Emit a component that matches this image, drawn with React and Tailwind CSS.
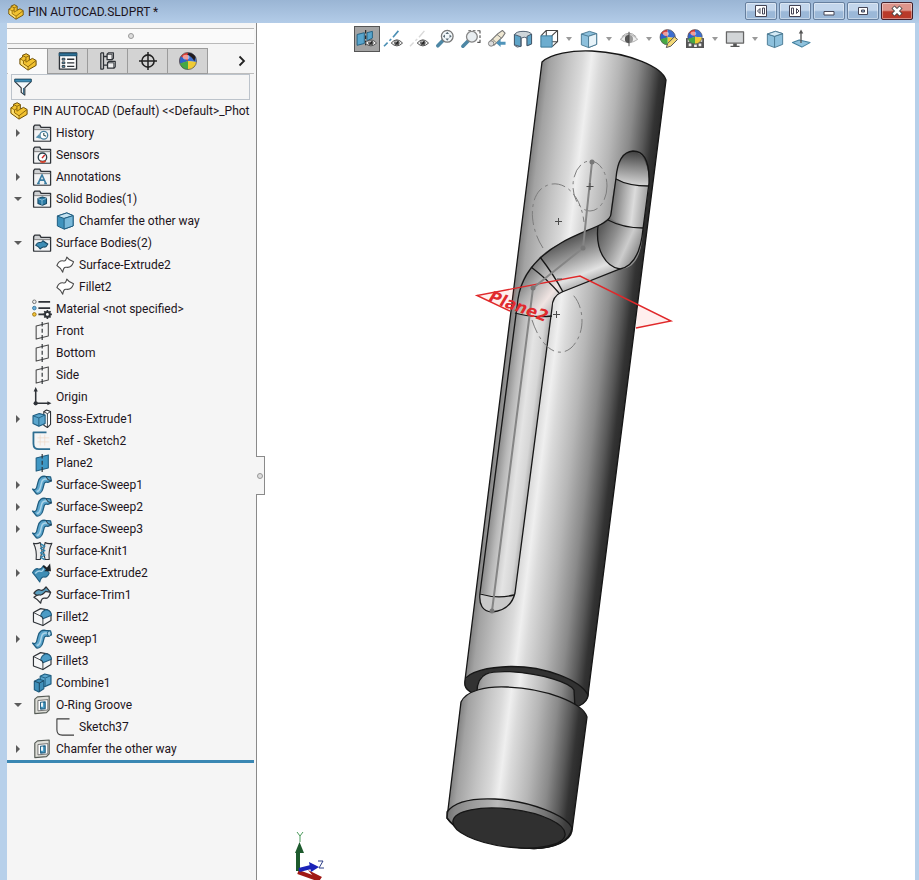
import React from "react";

const INK = "#2f3338";
const BLUE = "#5aa5cc";
const DEEP = "#1f5d80";
const PALE = "#a9d3e8";

function Icon({ children, size = "size-[18px]" }) {
  return (
    <svg viewBox="0 0 20 20" className={`${size} shrink-0 overflow-visible`} fill="none" strokeLinejoin="round" aria-hidden="true">
      {children}
    </svg>
  );
}

function PartShape() {
  return (
    <g stroke="#6b4d05" strokeWidth="1.1">
      <path d="M1 6.5 4 4.5V2.5L8 .8l3.500 2v5l3.500-1.800L19 8.300v5.500L10 19 1 12.500Z" fill="#f2c230" />
      <path d="m1 6.500 4 2.300V12l5 3.300 9-7M4 2.700l3.700 2.100L11.500 3M7.700 4.800v5.400l4-2.400M5 8.800l2.700-1.500M10 15.300V19" fill="none" stroke="#8f6a0c" />
      <path d="m2 7.500 2.300 1.400v3.300L9.300 15.700v2L2 12.300Z" fill="#fbe07a" stroke="none" />
    </g>
  );
}

function Folder({ children }) {
  return (
    <Icon>
      <path d="M.700 19V3L2 1.200h5.500L9 3.700h10.500V19Z" fill="#cfd1d3" stroke={INK} strokeWidth="1.500" />
      <path d="M1.500 6.500h17.300v11.800H1.500Z" fill="#f2f3f4" />
      <path d="M1 6.300h18.500" stroke="#777" />
      {children}
    </Icon>
  );
}

function Cube() {
  return (
    <g stroke={DEEP} strokeWidth="1.100">
      <path d="M1.500 4.500 12 1l7 3v11.500L9 19l-7.500-3.500Z" fill="#3f93bd" />
      <path d="M1.500 4.500 12 1l7 3-10 3.200Z" fill="#c5e3f1" />
      <path d="M9 7.200V19l10-3.500V4Z" fill="#79b9da" />
    </g>
  );
}

function Sweep({ closed }) {
  return (
    <Icon>
      <path d="M-.500 14.500c2 1 4 .500 4.500-1.500l1.500-6C6.500 2 10 -.500 14 .500l5.500 .500 1 4.500-4 1.500c-2-.500-3.500-.500-4 1.500l-1.500 5.500C10 18 7 20.500 4 20Z" fill={BLUE} stroke={DEEP} strokeWidth="1.400" />
      <path d="M4 17.300c2.500-.500 3.500-2 4-4l1.500-6C10.200 4.500 12 3 15.500 3.500" stroke={PALE} strokeWidth="1.700" />
      {closed ? <ellipse cx="18" cy="4" rx="2" ry="2.900" fill={PALE} stroke={DEEP} /> : <path d="m14.500 .500 2 3.500 4 1.500" stroke={INK} />}
    </Icon>
  );
}

function PlaneShape({ fill }) {
  return (
    <g>
      <path d="M3.500 4.500 17 1v14.500L3.500 19Z" fill={fill} stroke={fill === "none" ? "#4a4a4a" : DEEP} strokeWidth="1.200" />
      <path d="M10.200 0v5m0 2.500v4.500m0 2.500V20" stroke={INK} strokeWidth="1.300" />
    </g>
  );
}

function ColorBall({ cx = 10, cy = 10, r = 9 }) {
  return (
    <g transform={`translate(${cx} ${cy}) scale(${r / 9})`}>
      <path d="M0 0V-9A9 9 0 0 0-8.500 3Z" fill="#dc3a33" />
      <path d="M0 0-8.500 3A9 9 0 0 1-7.500-5Z" fill="#2c62c9" />
      <path d="M0 0 0-9A9 9 0 0 1 9 1Z" fill="#3d6fd0" />
      <path d="M0 0 9 1A9 9 0 0 1 0 9Z" fill="#efcb34" />
      <path d="M0 0V9a9 9 0 0 1-8.700-6.500Z" fill="#45a845" />
      <circle r="9" stroke="#555" strokeWidth=".8" />
      <ellipse cx="-2" cy="-4" rx="3.500" ry="2.500" fill="#fff" opacity=".5" />
    </g>
  );
}

function Eye({ x = 0, y = 0, s = 1 }) {
  return (
    <g transform={`translate(${x} ${y}) scale(${s})`}>
      <path d="M0 5Q7-3 14 5q-7 7-14 0Z" fill="#f2f2f2" stroke="#4e4e4e" strokeWidth="1.200" />
      <circle cx="7" cy="4.700" r="3.300" fill="#555" />
      <circle cx="7" cy="4.700" r="1.300" fill="#111" />
      <circle cx="6" cy="3.500" r=".9" fill="#fff" />
    </g>
  );
}

const icons = {
  part: <Icon><PartShape /></Icon>,
  history: (
    <Folder>
      <circle cx="12" cy="12.500" r="4.300" fill="#fff" stroke="#46809f" strokeWidth="1.500" />
      <path d="M12 10v2.500l2.500 1.200" stroke="#355" strokeWidth="1.300" />
      <path d="m3 15 4-4 1.500 5.500Z" fill="#5a93b0" />
    </Folder>
  ),
  sensors: (
    <Folder>
      <circle cx="10.500" cy="12.500" r="4.700" fill="#fff" stroke="#2b3f4a" strokeWidth="1.500" />
      <path d="m10 13.500 3-3.500" stroke="#c22" strokeWidth="1.600" />
      <path d="M8 17a5 5 0 0 0 6-.500" stroke="#d8432b" strokeWidth="2" />
    </Folder>
  ),
  annotations: (
    <Folder>
      <path d="m5.800 17 4.200-9.500 4.200 9.500M7.500 13.500h5M4.500 17.200h3m5 0h3" stroke="#3b7ea3" strokeWidth="1.800" />
    </Folder>
  ),
  solidFolder: (
    <Folder>
      <path d="m5.500 9.500 5-1.700 4.500 1.400v5.800l-4.500 2-5-2Z" fill="#2b7ba5" stroke="#174a66" strokeWidth="1.200" />
      <path d="m5.500 9.500 4.500 1.700 5-2M10 11.200V17" stroke="#a9d3e8" strokeWidth=".8" />
    </Folder>
  ),
  surfaceFolder: (
    <Folder>
      <path d="M3 12.500Q5 9 7.500 9.500q2.500 0 3.500-2 3 2.500 5.500 3.500-2 4-4 3.500T8 16.500Q6 13.500 3 12.500Z" fill="#3d8db5" stroke="#174a66" strokeWidth="1.200" />
    </Folder>
  ),
  cube: <Icon><Cube /></Icon>,
  surface: (
    <Icon>
      <path d="M1 10.500C3 5.500 6 5 8.500 5.500 11 6 11.500 3.500 12 1.200c2 3 4 4 7.500 5.300-2 6-5 6.500-8 6-2.500-.500-3.500 2-4 5.500-1.500-3-3-5.500-6.500-7.500Z" fill="#fff" stroke="#4a4a4a" strokeWidth="1.200" />
    </Icon>
  ),
  material: (
    <Icon>
      <path d="M6 2h13M6 9h13M6 16h6" stroke={INK} strokeWidth="2" />
      <circle cx="1.500" cy="2" r="2" fill="#eee" stroke="#666" />
      <circle cx="1.500" cy="9" r="2" fill="#6db0dc" stroke="#35759c" />
      <circle cx="1.500" cy="16" r="2" fill="#f3c437" stroke="#9a7414" />
      <path d="M16 11v10m-5-5h10M12.500 12.500l7 7m0-7-7 7" stroke={INK} strokeWidth="1.800" />
      <circle cx="16" cy="16" r="2.700" fill="#fff" stroke={INK} strokeWidth="2.200" />
    </Icon>
  ),
  plane: <Icon><PlaneShape fill="none" /></Icon>,
  planeBlue: <Icon><PlaneShape fill="#3f97c4" /></Icon>,
  origin: (
    <Icon>
      <path d="M3 3v14h14" stroke={INK} strokeWidth="1.700" />
      <path d="M3-1 5.300 4H.700ZM20.500 17 16 14.700v4.600Z" fill={INK} />
      <circle cx="3" cy="17" r="2.400" fill={INK} />
    </Icon>
  ),
  boss: (
    <Icon>
      <path d="M12 2 15 0l4.500 1.800V16L16 19.500 12 17Z" fill="#fff" stroke={INK} strokeWidth="1.200" />
      <path d="M16 4v15M12 2l4 2 3.500-2.200" stroke={INK} />
      <path d="m0 6.500 7-2.500 6.500 1.500v9.500L6.500 18 0 15Z" fill={BLUE} stroke={DEEP} strokeWidth="1.200" />
      <path d="m0 6.500 6.500 2.300 7-3.300M6.500 9v9" stroke={DEEP} />
    </Icon>
  ),
  sketchBlue: (
    <Icon>
      <path d="M5 6.500h13M5 11h13M8 3v12m5-12v12" stroke="#f0d9c8" strokeWidth=".8" />
      <path d="M15 .500H.500v12.500q0 6 6 6H19" stroke="#2d6e92" strokeWidth="2" />
    </Icon>
  ),
  sketch: <Icon><path d="M15 1H1v12q0 6 6 6h13" stroke="#3c3c3c" strokeWidth="1.200" /></Icon>,
  sweep: <Sweep />,
  sweepSolid: <Sweep closed />,
  knit: (
    <Icon>
      <path d="M.500 1.500Q5 2.500 8 .500L10 10 8 19.500H3.500Q4.500 9 .500 1.500ZM21 1.500q-4.500 1-7.500-1L11.500 10l2 9.500H18q-1-10.500 3-18Z" fill="#ececec" stroke={INK} strokeWidth="1.200" />
      <path d="m8.500 2 4.500 2.500-4.500 2.500 4.500 2.500L8.500 12l4.500 2.500L8.500 17l4.500 2.500" stroke="#3183ab" strokeWidth="1.700" />
    </Icon>
  ),
  extrude: (
    <Icon>
      <path d="M-.500 9.500Q3 4 6 5.500 9 6.500 11.500 2L18 10q-2 5-5.500 4.500T7.500 20Q3.500 14-.500 9.500Z" fill="#3e8db5" stroke={DEEP} strokeWidth="1.200" />
      <path d="M2.500 10.500q3-3.500 5.500-2.500t4-3" stroke={PALE} strokeWidth="1.500" />
      <path d="m12 1 3.500 3L19-.500 20 8h-7.500l2-2L11 3Z" fill="#1d2226" />
    </Icon>
  ),
  trim: (
    <Icon>
      <path d="M1 8q4-5 7-3.500T14.500 1L19.500 7q-3 3.500-6 2.500T7.500 13Z" fill="#5b9fc0" stroke={INK} strokeWidth="1.400" />
      <path d="M1 12.500q4-3 6.500-2.500T14 6l5.500 1q-2 7.500-6 6.500T8.500 19Q5.500 15 1 12.500Z" fill="#f6f6f6" stroke={INK} strokeWidth="1.400" />
    </Icon>
  ),
  fillet: (
    <Icon>
      <path d="M.500 5 8.500 .700 16 2q3.500 1.500 4 5.500V14L11 19.500 .500 15.500Z" fill="#f5f6f7" stroke={INK} strokeWidth="1.300" />
      <path d="M8.500 9Q9 4.500 14 2q6 .500 6.500 6L11 12Q11 10 8.500 9Z" fill="#4c9cc6" stroke={DEEP} strokeWidth="1.200" />
      <path d="m.500 5 8 4q2.500 1 2.500 3v7.500" stroke={INK} />
    </Icon>
  ),
  combine: (
    <Icon>
      <path d="m8 2.500 5-2.500 7 1.800v9.200L13 14 8 12Z" fill={BLUE} stroke={DEEP} strokeWidth="1.300" />
      <path d="m8 2.500 5.500 2 6.500-2.700M13.500 5v8" stroke={DEEP} />
      <path d="m1.500 8 5-2.500L12 7.500v9L6.500 20l-5-2.500Z" fill="#3f8fb9" stroke={DEEP} strokeWidth="1.300" />
      <path d="M1.500 8 7 10l5-2.500M7 10v9.500" stroke="#173f57" />
    </Icon>
  ),
  groove: (
    <Icon>
      <path d="m2 3.500 3-2.500 13-1v15.500l-3 3L2 19.500Z" fill="#dfdfd9" stroke="#555b55" strokeWidth="1.300" />
      <path d="M5.500 5 16.500 4v11.500l-11 1Z" fill="#fff" stroke="#666" />
      <path d="m8.500 7 5-.500v7.500l-5 .500Z" fill="#4ba0cb" stroke={DEEP} strokeWidth="1.300" />
      <path d="M9 7.500v4.500h2V7.300Z" fill="#fff" />
    </Icon>
  ),
};

const tree = [
  ["history", "History", 1, "closed"],
  ["sensors", "Sensors", 1],
  ["annotations", "Annotations", 1, "closed"],
  ["solidFolder", "Solid Bodies(1)", 1, "open"],
  ["cube", "Chamfer the other way", 2],
  ["surfaceFolder", "Surface Bodies(2)", 1, "open"],
  ["surface", "Surface-Extrude2", 2],
  ["surface", "Fillet2", 2],
  ["material", "Material <not specified>", 1],
  ["plane", "Front", 1],
  ["plane", "Bottom", 1],
  ["plane", "Side", 1],
  ["origin", "Origin", 1],
  ["boss", "Boss-Extrude1", 1, "closed"],
  ["sketchBlue", "Ref - Sketch2", 1],
  ["planeBlue", "Plane2", 1],
  ["sweep", "Surface-Sweep1", 1, "closed"],
  ["sweep", "Surface-Sweep2", 1, "closed"],
  ["sweep", "Surface-Sweep3", 1, "closed"],
  ["knit", "Surface-Knit1", 1],
  ["extrude", "Surface-Extrude2", 1, "closed"],
  ["trim", "Surface-Trim1", 1],
  ["fillet", "Fillet2", 1],
  ["sweepSolid", "Sweep1", 1, "closed"],
  ["fillet", "Fillet3", 1],
  ["combine", "Combine1", 1],
  ["groove", "O-Ring Groove", 1, "open"],
  ["sketch", "Sketch37", 2],
  ["groove", "Chamfer the other way", 1, "closed"],
];

function TreeRow({ icon, label, level, state }) {
  return (
    <li className={`flex h-[22px] items-center ${level === 2 ? "pl-[23px]" : ""}`}>
      <span className="mr-1 flex w-[22px] shrink-0 justify-center">
        {state && (
          <button type="button" aria-label={`Toggle ${label}`} aria-expanded={state === "open"} className="flex size-3 items-center justify-center">
            <svg viewBox="0 0 8 8" className="size-2">
              <path d={state === "open" ? "M0 2h8L4 6Z" : "M2 0v8l4-4Z"} fill="#5c5c5c" />
            </svg>
          </button>
        )}
      </span>
      <button type="button" className="flex items-center gap-[5px] whitespace-nowrap text-left">
        {icons[icon]}
        {label}
      </button>
    </li>
  );
}

function WindowButton({ label, close, children }) {
  return (
    <button
      type="button"
      aria-label={label}
      className={`flex h-[18px] w-8 items-center justify-center rounded-xs border shadow-[inset_0_0_0_1px_#ffffff66] ${
        close
          ? "border-[#43202b] bg-linear-to-b from-[#dd958c] from-45% to-[#b93a2a] to-55%"
          : "border-[#667f9e] bg-linear-to-b from-[#c3d6ec] from-45% to-[#9bb8d8] to-55%"
      }`}
    >
      <svg viewBox="0 0 16 14" className="h-3.5 w-4" fill="none" aria-hidden="true">
        {children}
      </svg>
    </button>
  );
}

function TitleBar() {
  return (
    <header className="flex h-[23px] items-start bg-linear-to-b from-[#9ab5d4] to-[#b3cce8] pr-1.5 pl-2">
      <h1 className="flex h-[23px] flex-1 items-center gap-1">
        <Icon size="size-4"><PartShape /></Icon>
        PIN AUTOCAD.SLDPRT *
      </h1>
      <div className="flex gap-0.5 pt-0.5">
        <WindowButton label="Dock left">
          <path d="M2.500 1.500h11v11h-11Z" fill="#fff" stroke="#445" />
          <path d="M7 4.500v5L4.500 7ZM9.500 4h2v6h-2Z" stroke="#445" />
        </WindowButton>
        <WindowButton label="Dock right">
          <path d="M2.500 1.500h11v11h-11Z" fill="#fff" stroke="#445" />
          <path d="M9.500 4.500v5L12 7ZM4.500 4h2v6h-2Z" stroke="#445" />
        </WindowButton>
        <WindowButton label="Minimize">
          <path d="M3 7.500h10v3.500H3Z" fill="#fff" stroke="#445" />
        </WindowButton>
        <WindowButton label="Restore">
          <path d="M3.500 3.500h9v7h-9Z" fill="#fff" stroke="#445" />
          <path d="M6.500 6h3v2h-3Z" stroke="#445" fill="#9bb8d8" />
        </WindowButton>
        <WindowButton label="Close" close>
          <path d="m4 3 8 8m0-8-8 8" stroke="#444" strokeWidth="4.500" />
          <path d="m4.500 3.500 7 7m0-7-7 7" stroke="#fff" strokeWidth="2.600" />
        </WindowButton>
      </div>
    </header>
  );
}

const tabs = [
  ["Feature tree", <PartShape />],
  [
    "Properties",
    <g stroke={INK} strokeWidth="1.500">
      <path d="M.500 1h19v18H.500Z" fill="#fff" />
      <path d="M.500 1.500h19V4H.500Z" fill="#2f7298" stroke="#235a7a" />
      <path d="M3.500 7h3v2h-3Zm0 4h3v2h-3Zm0 4h3v2h-3Z" fill="#5aa5cc" strokeWidth="1" />
      <path d="M9 8h8M9 12h8M9 16h8" />
    </g>,
  ],
  [
    "Configurations",
    <g stroke={INK} strokeWidth="1.400">
      <path d="M2 1v18h3M2 1h3v18M5 5h4M5 14.500h4" />
      <path d="M9 2.500 10.500 1H16v6l-1.500 1.500H9ZM9.500 12l1.500-1.500h7v6L16.500 18h-7Z" fill="#eee" />
      <path d="M9 2.500h5.500v6M9.500 12h7v6" strokeWidth="1" />
    </g>,
  ],
  [
    "Dimensions",
    <g stroke="#222" strokeWidth="1.700">
      <circle cx="10" cy="10" r="6.800" />
      <path d="M10 0v20M0 10h20" />
    </g>,
  ],
  [
    "Appearance",
    <g>
      <ColorBall r={9.5} />
      <path d="M9 2.500q4-4 9.500 3-1 3-1.500 5-2-5-8-8Z" fill="#221b1d" />
    </g>,
  ],
];

function Sidebar() {
  return (
    <aside className="relative z-10 w-[250px] shrink-0 border-r border-[#8a8a8a] bg-[#f5f5f5]">
      <div className="mt-[5px] mr-0.5 flex h-4 items-center justify-center border-y border-[#b9b9b9] bg-[#fafafa]">
        <span className="size-1.5 rounded-full border border-[#999] bg-[#ddd]" />
      </div>
      <div className="mt-1 mr-0.5 flex h-[26px] border-b border-[#bdbdbd] pl-px">
        <div role="tablist" className="-mb-px flex">
          {tabs.map(([label, drawing], i) => (
            <button
              key={label}
              type="button"
              role="tab"
              aria-label={label}
              aria-selected={i === 0}
              className={`flex w-10 items-center justify-center border-t border-r border-[#9b9b9b] ${i === 0 ? "bg-[#fafafa]" : "border-b bg-[#d3d3d3]"}`}
            >
              <Icon>{drawing}</Icon>
            </button>
          ))}
        </div>
        <button type="button" aria-label="More tabs" className="ml-auto flex w-6 items-center justify-center">
          <svg viewBox="0 0 8 12" className="h-3 w-2" fill="none">
            <path d="m1.500 1.500 4.500 4.500-4.500 4.500" stroke="#222" strokeWidth="1.800" />
          </svg>
        </button>
      </div>
      <div className="mr-1.5 ml-1 flex h-[26px] items-center border border-[#bcc3cb] pl-0.5">
        <Icon>
          <path d="M1 1.500h18v2.500l-7 7V19l-4-3v-5L1 4Z" fill="#f4f7f9" stroke={INK} strokeWidth="1.300" />
          <path d="M1 1.500h18v2.700H1Z" fill="#3e8fb8" stroke={DEEP} />
          <path d="M10 11v7l1.500.500V11Z" fill="#3e6e8a" />
        </Icon>
        <input type="text" aria-label="Filter" className="h-full min-w-0 flex-1 bg-transparent outline-none" />
      </div>
      <div className="mr-0.5 overflow-hidden border-b-3 border-[#3a87b3]">
        <button type="button" className="flex h-[22px] items-center gap-[5px] pl-[3px] whitespace-nowrap">
          {icons.part}
          PIN AUTOCAD (Default) &lt;&lt;Default&gt;_Phot
        </button>
        <ul>
          {tree.map(([icon, label, level, state], i) => (
            <TreeRow key={i} icon={icon} label={label} level={level} state={state} />
          ))}
        </ul>
      </div>
      <button
        type="button"
        aria-label="Collapse panel"
        className="absolute top-[433px] -right-[9px] flex h-[39px] w-[9px] items-center justify-center border border-l-0 border-[#8a8a8a] bg-[#f5f5f5]"
      >
        <span className="size-1.5 shrink-0 rounded-full border border-[#999] bg-[#ddd]" />
      </button>
    </aside>
  );
}

function SoftCube({ edges }) {
  return (
    <g stroke="#45758e" strokeWidth="1">
      <path d="m1.500 4.500 9-3 8 2.500v12L9.500 19.500l-8-3Z" fill="#8dc0dc" />
      <path d="m1.500 4.500 8 2.500 9-3M9.500 7v12.500" />
      {edges ? <path d="m9.500 7 9-3v12l-9 3.500Z" fill="#e7f3f9" /> : <path d="m1.500 4.500 9-3 8 2.500-9 3Z" fill="#d4eaf5" />}
    </g>
  );
}

const tools = [
  [
    "View planes",
    <g>
      <path d="M-1 5 7 3v12l-8 2ZM10 3l6-1.500V9l-6 3Z" fill="#58a5cd" stroke={DEEP} />
      <path d="M8.500 0v4m0 2v4m0 2v5" stroke="#222" strokeWidth="1.300" />
      <Eye x={8} y={10} s={0.9} />
    </g>,
    false,
    true,
  ],
  [
    "View axes",
    <g>
      <path d="M0 18 4 14m2-2 2-2m2-2 6-7" stroke="#4b8fb4" strokeWidth="1.800" />
      <Eye x={8} y={10} s={0.9} />
    </g>,
  ],
  [
    "View sketches",
    <g>
      <path d="M0 18 4 14m2-2 2-2m2-2 6-7" stroke="#d9d9d9" strokeWidth="1.600" />
      <Eye x={8} y={10} s={0.9} />
    </g>,
  ],
  [
    "Zoom to fit",
    <g>
      <path d="m2 17.500 6-6" stroke="#4d87a5" strokeWidth="4" strokeLinecap="round" />
      <circle cx="12.500" cy="7" r="6.500" fill="#f2f7fa" stroke="#777" strokeWidth="1.400" />
      <path d="M12.500 2 14.500 4.500h-4Zm0 10-2-2.500h4ZM7.500 7 10 5v4Zm10 0L15 5v4Z" fill="#5c6d77" />
    </g>,
  ],
  [
    "Zoom to area",
    <g>
      <path d="M7 .800h3m2 0h3m2 0h3v3m0 2v3m0 2v3h-3" stroke="#555" strokeWidth="1.300" />
      <path d="m1 18 6-6" stroke="#4d87a5" strokeWidth="4" strokeLinecap="round" />
      <circle cx="11" cy="7.500" r="6" fill="#e9eef1" stroke="#858585" strokeWidth="1.400" />
    </g>,
  ],
  [
    "Previous view",
    <g>
      <path d="m2 13 9-9 5-3.500L19 3.500 16 8l-9.500 9Z" fill="#efe8d3" stroke="#777" strokeWidth="1.200" />
      <path d="m10 5 5 4M5 10l4 4" stroke="#777" />
      <circle cx="3.500" cy="15" r="3" fill="#ddd" stroke="#777" />
      <path d="m9 14.500 5-4.500v3h5.500v3.500H14v2.500Z" fill="#4f94ba" />
    </g>,
  ],
  [
    "Section view",
    <g stroke="#456">
      <path d="M.500 5Q3 1.500 10 1.500t9.500 3v11l-5 2V9q-3-2-6.500 0v9l-4.500 1-3-2Z" fill="#cfd6da" />
      <path d="m.500 5 7 2.500v11l-7-2ZM14.500 7l5-2.500v11l-5 2Z" fill="#5ea4c8" />
    </g>,
  ],
  [
    "View orientation",
    <g>
      <path d="M1 6.500 7 .500h12.500v12.500l-6 5.500M7 .500v12.500H1m6 0h12.500M13 6.500l6.500-6" stroke="#444" strokeWidth="1.200" />
      <path d="M1 6.500h12.500v12.500H1Z" fill="#6dadcf" stroke="#3c7796" strokeWidth="1.100" />
    </g>,
    true,
  ],
  ["Display style", <SoftCube edges />, true],
  [
    "Hide or show",
    <g>
      <path d="M.500 10.500Q10-.500 19.500 10.500 10 18 .500 10.500Z" fill="#efefef" stroke="#b9b9b9" strokeWidth="1.200" />
      <path d="M2 7.500Q10-.500 18 7.500" stroke="#999" />
      <circle cx="10" cy="10" r="4.500" fill="#9a9a9a" />
      <path d="M10 5.500a4.500 4.500 0 0 0 0 9Z" fill="#555" />
      <path d="M10 2v16" stroke="#444" />
    </g>,
    true,
  ],
  [
    "Edit appearance",
    <g>
      <ColorBall cx={8.5} cy={8} r={8.5} />
      <path d="m7 19.500 1.500-4.500 7.500-7.500 3.500 3L12 18Z" fill="#f3d978" stroke="#555" strokeWidth="1.100" />
    </g>,
  ],
  [
    "Apply scene",
    <g>
      <path d="M0 9h20v11H0Z" fill="#555" />
      <path d="M2 10h3v3H2Zm13 0h3v3h-3ZM3 15h3v3H3Zm11 0h3v3h-3Zm-5 1h3v3H9Z" fill="#eee" />
      <ColorBall cx={10} cy={7.5} r={8} />
    </g>,
    true,
  ],
  [
    "View settings",
    <g>
      <path d="M.500 2h19v12.500H.500Z" fill="#d2d5d7" stroke="#666" strokeWidth="1.400" />
      <path d="M8 15h4v2.500h3V19H5v-1.500h3Z" fill="#555" />
    </g>,
    true,
  ],
  ["Isometric view", <SoftCube />],
  [
    "Normal to",
    <g>
      <path d="m.500 14 7.500-3 12 3-9 5Z" fill="#8fc2dd" stroke="#43809f" strokeWidth="1.200" />
      <path d="M10 14.500V3" stroke="#555" strokeWidth="1.500" />
      <path d="M10-.500 12.500 4h-5Z" fill="#555" />
    </g>,
  ],
];

function ViewToolbar() {
  return (
    <div role="toolbar" aria-label="View" className="relative flex justify-center pt-[3px] pr-1">
      {tools.map(([label, drawing, menu, active]) => (
        <React.Fragment key={label}>
          <button
            type="button"
            aria-label={label}
            className={`flex size-[26px] items-center justify-center ${active ? "border border-[#555] bg-[#a3a3a3]" : ""}`}
          >
            <Icon>{drawing}</Icon>
          </button>
          {menu && (
            <button type="button" aria-label={`${label} options`} className="flex w-3.5 items-center justify-center">
              <svg viewBox="0 0 6 4" className="h-1 w-1.5">
                <path d="M0 0h6L3 4Z" fill="#9a9a9a" />
              </svg>
            </button>
          )}
        </React.Fragment>
      ))}
    </div>
  );
}

function Shade({ id, x1, y1, x2, y2 }) {
  return (
    <linearGradient id={id} gradientUnits="userSpaceOnUse" x1={x1} y1={y1} x2={x2} y2={y2}>
      <stop offset="0" stopColor="#828282" />
      <stop offset=".06" stopColor="#a2a2a2" />
      <stop offset=".2" stopColor="#c2c2c2" />
      <stop offset=".32" stopColor="#dadada" />
      <stop offset=".39" stopColor="#efefef" />
      <stop offset=".46" stopColor="#dadada" />
      <stop offset=".62" stopColor="#b6b6b6" />
      <stop offset=".77" stopColor="#8a8a8a" />
      <stop offset=".88" stopColor="#595959" />
      <stop offset=".95" stopColor="#333" />
      <stop offset="1" stopColor="#2a2a2a" />
    </linearGradient>
  );
}

function PinModel() {
  return (
    <svg viewBox="257 23 658 857" className="absolute inset-0 size-full" fill="none" role="img" aria-label="Pin model">
      <defs>
        <Shade id="shaft" x1="542" y1="62" x2="666" y2="77.500" />
        <Shade id="neck" x1="476" y1="685" x2="586" y2="698.500" />
        <Shade id="foot" x1="461" y1="702" x2="585" y2="717.500" />
        <linearGradient id="slot" gradientUnits="userSpaceOnUse" x1="508" y1="370" x2="543" y2="374.400">
          <stop offset="0" stopColor="#8a8a8a" />
          <stop offset=".25" stopColor="#b8b8b8" />
          <stop offset=".6" stopColor="#e4e4e4" />
          <stop offset=".85" stopColor="#d6d6d6" />
          <stop offset="1" stopColor="#b0b0b0" />
        </linearGradient>
        <linearGradient id="bend" gradientUnits="userSpaceOnUse" x1="564" y1="238" x2="584" y2="288">
          <stop offset="0" stopColor="#4e4e4e" />
          <stop offset=".35" stopColor="#909090" />
          <stop offset=".75" stopColor="#e2e2e2" />
          <stop offset="1" stopColor="#a0a0a0" />
        </linearGradient>
        <linearGradient id="turn" gradientUnits="userSpaceOnUse" x1="520" y1="275" x2="556" y2="302">
          <stop offset="0" stopColor="#6a6a6a" />
          <stop offset=".4" stopColor="#b0b0b0" />
          <stop offset=".8" stopColor="#f0e4e2" />
          <stop offset="1" stopColor="#c8c8c8" />
        </linearGradient>
        <linearGradient id="pocket" gradientUnits="userSpaceOnUse" x1="612" y1="200" x2="648" y2="204.500">
          <stop offset="0" stopColor="#707070" />
          <stop offset=".3" stopColor="#a8a8a8" />
          <stop offset=".6" stopColor="#dcdcdc" />
          <stop offset="1" stopColor="#989898" />
        </linearGradient>
        <linearGradient id="dome" gradientUnits="userSpaceOnUse" x1="634" y1="151" x2="631" y2="184">
          <stop offset="0" stopColor="#3f3f3f" />
          <stop offset=".5" stopColor="#8a8a8a" />
          <stop offset="1" stopColor="#d2d2d2" />
        </linearGradient>
        <linearGradient id="elbow" gradientUnits="userSpaceOnUse" x1="600" y1="230" x2="640" y2="248">
          <stop offset="0" stopColor="#5c5c5c" />
          <stop offset=".35" stopColor="#8e8e8e" />
          <stop offset=".7" stopColor="#cccccc" />
          <stop offset="1" stopColor="#8c8c8c" />
        </linearGradient>
      </defs>

      <g stroke="#161616" strokeWidth="1.300">
        <path d="M465 680C463 687 466 690 471 692.500L480 700 575 707 579 706C586 703 589 698 588 692L575 660H480Z" fill="#323232" stroke="none" />
        <path d="M465 680C464 686 466 689 471 692.500M588 692C589 699 585 703 579 706" />
        <path d="M477 692C477 672 490 671 510 671.700C545 674 570 683 574 690L575 708L477 700Z" fill="url(#neck)" />
        <path d="M542 62C550 54 572 50 592 51C630 53 662 67 666 80L588 695C580 680 545 666 510 666.500C488 667 468 672 465 680Z" fill="url(#shaft)" />
        <path d="M461 702C466 691 485 686 507 687C545 688 583 703 587 717L572 831C570 841 555 848 534 848.500C500 848 460 836 447 818Z" fill="url(#foot)" />
        <path d="M447 812C455 801 472 798 495 799C530 801 566 815 572 828C570 841 555 848 534 848.500C500 848 460 836 447 818Z" fill="#555" fillOpacity=".35" />
        <ellipse cx="509" cy="828" rx="56.500" ry="19" transform="rotate(7 509 828)" fill="#303030" />
      </g>

      <path d="M515 313 480 593Q478 611 492 612Q511 610 515 593L551 316Q530 318 515 313Z" fill="url(#slot)" />
      <path d="M515 313Q516 285 531 267L540 257 563 292Q552 296 551 316Q530 318 515 313Z" fill="url(#turn)" />
      <path d="M611 214C610 225 585 229 561 243Q548 249 540 257L563 292L620 269L640 240Z" fill="url(#bend)" />
      <path d="M598 226L610 217L643 229C642 255 635 269 620 269C604 266 595 250 598 226Z" fill="url(#elbow)" />
      <path d="M610 218Q612 196 616 178L649 186L643 229Q624 228 610 218Z" fill="url(#pocket)" />
      <path d="M616 178Q619 153 633 151Q649 154 649 186Q628 187 616 178Z" fill="url(#dome)" />
      <path d="M480 593Q497 599 514 595Q508 611 492 612Q479 611 480 593Z" fill="#c9c9c9" />

      <g stroke="#161616" strokeWidth="1.300">
        <path d="M480 593Q478 611 492 612Q511 610 515 593L552 308Q552 296 562 292L620 269C635 266 641 250 643 229L649 183C650 158 642 151 633 151C620 152 617 166 616 178L611 214C610 225 585 229 561 243C540 255 522 272 518 299Z" />
        <path d="M480 594Q497 599 514 595M616 179Q628 186 649 186M608 220Q623 228 643 228M598 226C595 250 606 267 620 269M540 257Q554 275 563 292M531 267Q547 279 559 293M515 313Q532 318 552 316" />
      </g>

      <path d="M511 310 477 295.500 517 288Z M638 305 671 321 636 328Z" fill="#ff3020" fillOpacity=".08" />
      <path d="M510 311 477 295.500 580 276 671 321 636 328" stroke="#e0282a" strokeWidth="1.400" />

      <g stroke="#7d7d7d">
        <g strokeDasharray="14 4 3 4">
          <ellipse cx="590" cy="186" rx="17" ry="25" />
          <path d="M543 248C531 230 528 203 540 190C556 175 580 188 584 222" />
          <path d="M532 320C540 345 556 360 571 348C587 333 584 305 572 294" />
        </g>
        <path d="M592 162 583 248 533 288 492 611" stroke="#858585" strokeWidth="2" />
      </g>
      <g fill="#777">
        <circle cx="592" cy="162" r="2.500" />
        <circle cx="583" cy="248" r="2.500" />
        <circle cx="533" cy="288" r="2.500" />
        <circle cx="492" cy="611" r="2.500" />
      </g>
      <path d="M586.500 186.500h7m-3.500-3.500v7M555 221.500h7m-3.500-3.500v7M553 314.500h7m-3.500-3.500v7M557 279h5" stroke="#4c4c4c" />
      <text x="488" y="301" transform="rotate(20 488 301)" className="fill-[#e02b2d] font-[DejaVu_Sans,sans-serif] text-[16px] font-bold italic">
        Plane2
      </text>

      <g>
        <path d="m298 872 22 8" stroke="#a01814" strokeWidth="4" />
        <path d="m308 870 14 7-4 5Z" fill="#a01814" />
        <path d="M298 871v-18" stroke="#1d5a2d" strokeWidth="4" />
        <path d="M299.500 842 304 853h-9Z" fill="#1d5a2d" />
        <path d="m299 870 12-3" stroke="#1a22b8" strokeWidth="4" />
        <path d="m309 862 10 5-8 5Z" fill="#1a22b8" />
        <path d="m297 832 3 4 3-4m-3 4v6" stroke="#4a9a5a" />
        <path d="M318 861h5l-4 7h5" stroke="#2b3c86" />
      </g>
    </svg>
  );
}

export default function App() {
  return (
    <div className="flex h-screen w-full flex-col overflow-hidden bg-[#b7d0ea] font-[Roboto,Open_Sans,sans-serif] text-[12px] text-[#1c1420]">
      <TitleBar />
      <div className="flex min-h-0 flex-1 pr-1 pl-[7px]">
        <Sidebar />
        <main className="relative min-w-0 flex-1 bg-white">
          <PinModel />
          <ViewToolbar />
        </main>
      </div>
    </div>
  );
}
